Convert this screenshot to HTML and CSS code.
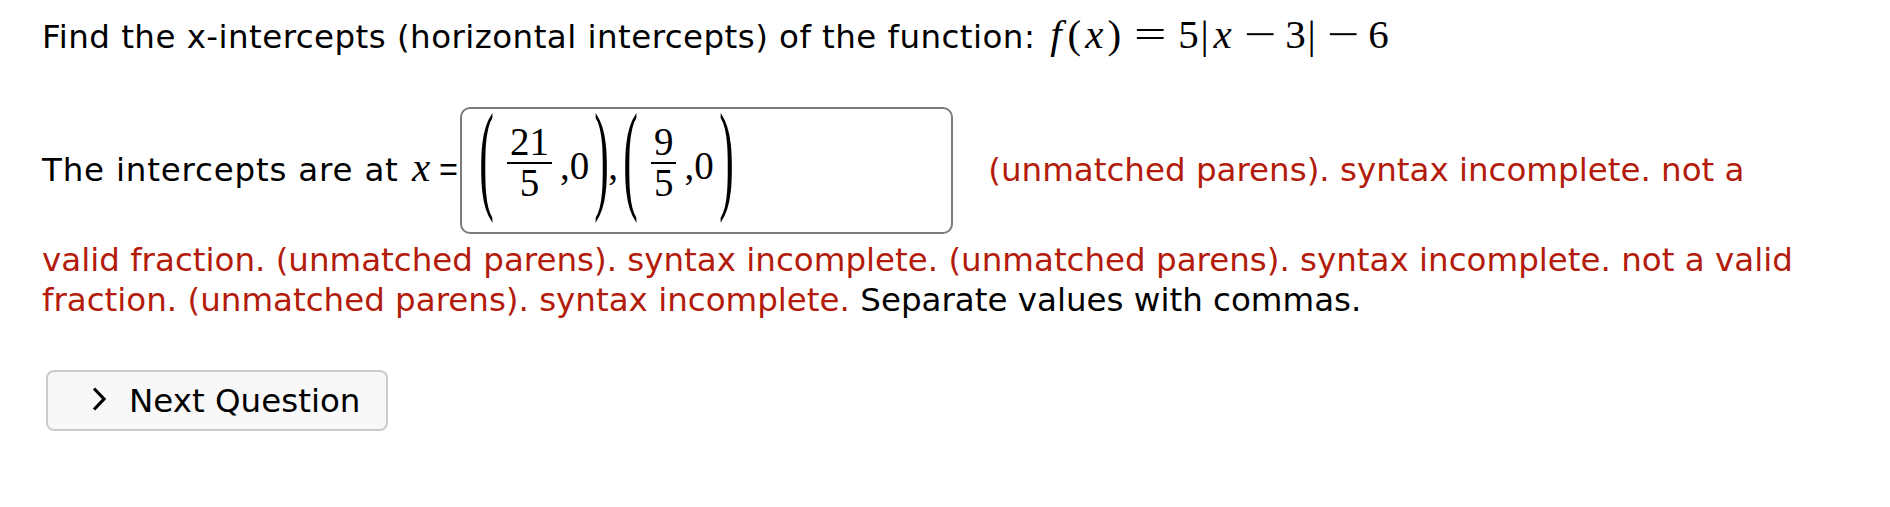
FILE: index.html
```html
<!DOCTYPE html>
<html>
<head>
<meta charset="utf-8">
<link rel="stylesheet" href="styles.css">
</head>
<body>
<div class="page">
  <div class="question"><span class="qtext">Find the x-intercepts (horizontal intercepts) of the function:</span> <span class="tm"><span class="g gi w-f">f</span><span class="g w-par">(</span><span class="g gi w-x">x</span><span class="g w-par">)</span><span class="g w-rel">=</span><span class="g w-dig">5</span><span class="g w-bar">|</span><span class="g gi w-x">x</span><span class="g w-bin">−</span><span class="g w-dig">3</span><span class="g w-bar">|</span><span class="g w-bin">−</span><span class="g w-dig">6</span></span></div>
  <div class="answer"><span class="lead">The intercepts are at</span> <span class="tm"><span class="g gi w-x">x</span></span><span class="eq">=</span><span class="mq"><span class="mq-root"><span class="paren lp first">(</span><span class="frac f1"><span class="num">21</span><span class="den">5</span></span>,0<span class="paren rp">)</span>,<span class="paren lp">(</span><span class="frac f2"><span class="num">9</span><span class="den">5</span></span>,0<span class="paren rp">)</span></span></span> <span class="err">(unmatched parens). syntax incomplete. not a valid fraction. (unmatched parens). syntax incomplete. (unmatched parens). syntax incomplete. not a valid fraction. (unmatched parens). syntax incomplete.</span> Separate values with commas.</div>
  <button class="next"><svg class="chev" width="14" height="24" viewBox="0 0 14 24"><polyline points="2,1.5 12,12 2,22.5" fill="none" stroke="#000" stroke-width="3.2"/></svg><span>Next Question</span></button>
</div>
</body>
</html>
```

FILE: styles.css
```css
html, body {
  margin: 0;
  padding: 0;
  background: #fff;
}

.page {
  padding: 17px 0 0 42px;
  width: 1773px;
  font-family: "DejaVu Sans", "Liberation Sans", sans-serif;
  font-size: 32.5px;
  line-height: 40px;
  color: #000;
}

.question {
  margin-bottom: 50px;
}

.qtext {
  letter-spacing: 0.45px;
}

.lead {
  letter-spacing: 0.8px;
}

.tm {
  font-family: "Liberation Serif", "DejaVu Serif", serif;
  font-size: 41px;
  line-height: 32px;
}

.g {
  display: inline-block;
  text-align: center;
}

.gi {
  font-style: italic;
}

.w-f { width: 20.5px; }
.w-par { width: 16.2px; }
.w-x { width: 24px; }
.w-dig { width: 21px; }
.w-bar { width: 11.6px; }
.w-rel {
  width: 32.4px;
  margin: 0 11.5px;
  transform: scaleX(1.4);
}
.w-bin {
  width: 32.4px;
  margin: 0 9px;
  transform: scaleX(1.4);
}

.eq {
  font-family: "Liberation Sans", sans-serif;
  margin: 0 2px 0 6px;
}

.mq {
  display: inline-block;
  box-sizing: border-box;
  width: 493px;
  height: 127px;
  border: 2px solid #7c7c7c;
  border-radius: 10px;
  padding: 15px 0 0 13px;
  margin-bottom: 6px;
  vertical-align: 2px;
  background: #fff;
}

.mq-root {
  display: block;
  font-family: "Liberation Serif", "Times New Roman", serif;
  font-size: 39px;
  line-height: 40px;
  white-space: nowrap;
}

.paren {
  display: inline-block;
  transform: translateY(-9.4px) scale(1.12, 3.1);
}

.lp { margin-left: 6px; }
.lp.first { margin-left: 5px; }
.rp { margin-left: 6px; }

.frac {
  display: inline-block;
  vertical-align: -17px;
  text-align: center;
  margin: 0 8px 0 14px;
}

.num {
  display: block;
  line-height: 36px;
  padding: 0 3px 2px;
}

.den {
  display: block;
  line-height: 36px;
  border-top: 2px solid #000;
  padding-top: 1px;
}

.err {
  color: #b31b0b;
  margin-left: 25px;
}

.next {
  display: flex;
  align-items: center;
  box-sizing: border-box;
  width: 342px;
  height: 61px;
  margin: 50px 0 0 4px;
  padding: 0 0 0 44px;
  border: 2px solid #cbcbcb;
  border-radius: 8px;
  background: #f8f8f8;
  font: inherit;
  color: #000;
}

.chev {
  flex: none;
  margin: -3px 23px 0 0;
}
```
